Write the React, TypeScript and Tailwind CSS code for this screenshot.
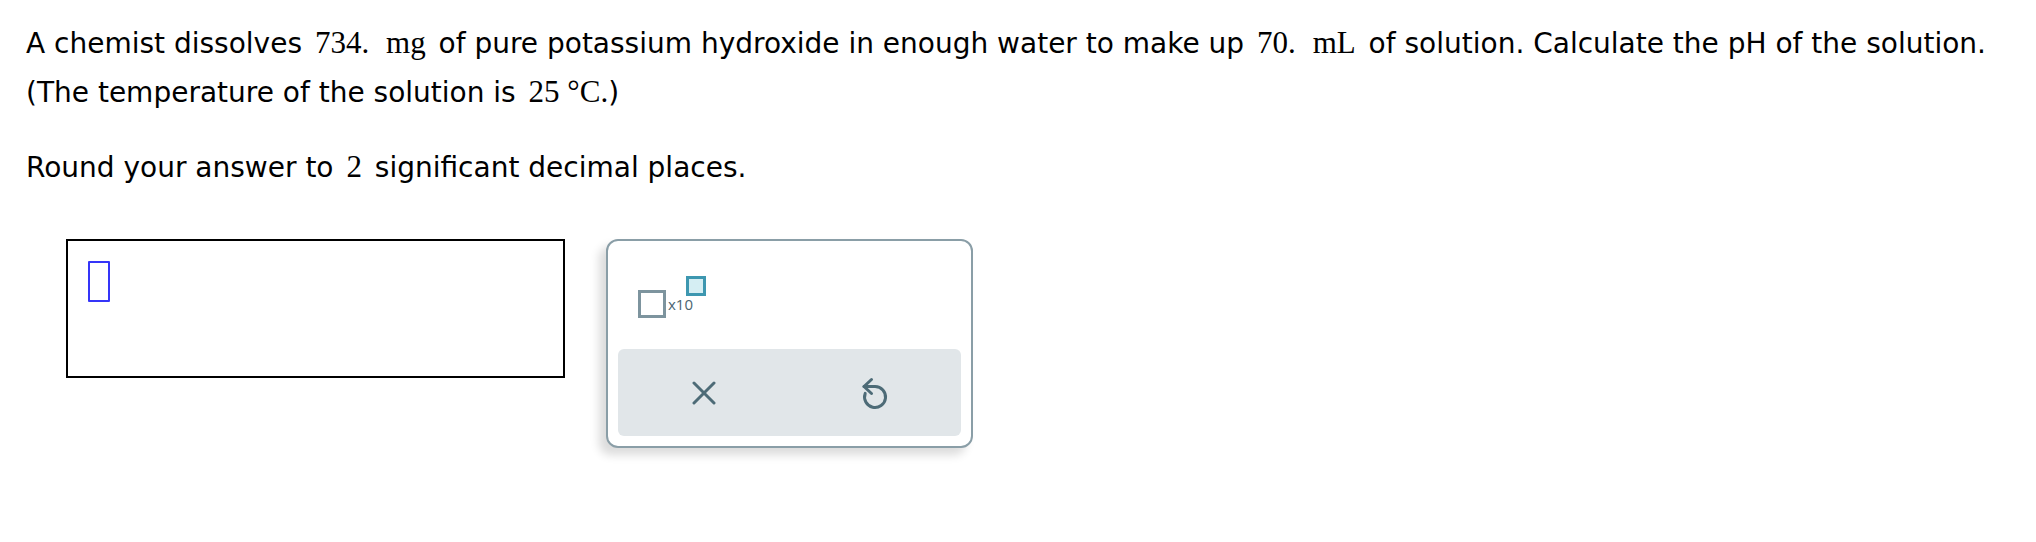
import type { ReactNode } from 'react';

function M({ children, tight }: { children: ReactNode; tight?: boolean }) {
  return (
    <span
      className={
        tight
          ? "font-['Liberation_Serif','Times_New_Roman',serif] text-[31px] leading-none ml-[4px]"
          : "font-['Liberation_Serif','Times_New_Roman',serif] text-[31px] leading-none mx-[4px]"
      }
    >
      {children}
    </span>
  );
}

function UndoIcon() {
  return (
    <svg width="30" height="34" viewBox="0 0 30 34" fill="none" stroke="#4d6b77" strokeWidth="3" strokeLinecap="round" strokeLinejoin="round">
      <path d="M4 10.5 H15 A10.5 10.5 0 1 1 5.2 17.4" />
      <path d="M11.5 3.5 L4 10.5 L11.5 17.5" />
    </svg>
  );
}

function CloseIcon() {
  return (
    <svg width="24" height="24" viewBox="0 0 24 24" fill="none" stroke="#4d6b77" strokeWidth="3" strokeLinecap="round">
      <path d="M2 2 L22 22" />
      <path d="M22 2 L2 22" />
    </svg>
  );
}

export default function App() {
  return (
    <div className="min-h-screen bg-white text-black font-['DejaVu_Sans','Verdana',sans-serif] text-[28px] leading-[49px] px-[26px] pt-[19px]">
      <p className="whitespace-nowrap">
        A chemist dissolves <M>734.</M> <M>mg</M> of pure potassium hydroxide in enough water to make up <M>70.</M>{' '}
        <M>mL</M> of solution. Calculate the pH of the solution.
        <br />
        (The temperature of the solution is <M tight>25 °C.</M>)
      </p>

      <p className="mt-[26px] whitespace-nowrap">
        Round your answer to <M>2</M> significant decimal places.
      </p>

      <div className="mt-[47px] flex items-start gap-[41px] pl-[40px]">
        <div className="w-[499px] h-[139px] border-2 border-black p-[20px]">
          <div className="w-[22px] h-[41px] border-2 border-[#3535f8] rounded-[1px]" />
        </div>

        <div className="w-[367px] h-[209px] flex flex-col border-2 border-[#8a9ea7] rounded-[12px] bg-white p-[10px] shadow-[-7px_7px_10px_rgba(0,0,0,0.14)]">
          <div className="h-[98px] pl-[20px] pt-[33px]">
            <div className="relative inline-flex items-end">
              <div className="w-[28px] h-[28px] border-[3px] border-[#7d949e]" />
              <span className="ml-[2px] mb-[6px] font-['Open_Sans',sans-serif] text-[15px] leading-none text-[#4a6470]">
                x10
              </span>
              <div className="absolute left-[48px] top-[-14px] w-[20px] h-[20px] border-[3px] border-[#3d97b0] bg-[#d5eef3]" />
            </div>
          </div>
          <div className="grid grid-cols-2 h-[87px] rounded-[6px] bg-[#e1e6e9]">
            <button className="flex items-center justify-center">
              <CloseIcon />
            </button>
            <button className="flex items-center justify-center">
              <UndoIcon />
            </button>
          </div>
        </div>
      </div>
    </div>
  );
}
